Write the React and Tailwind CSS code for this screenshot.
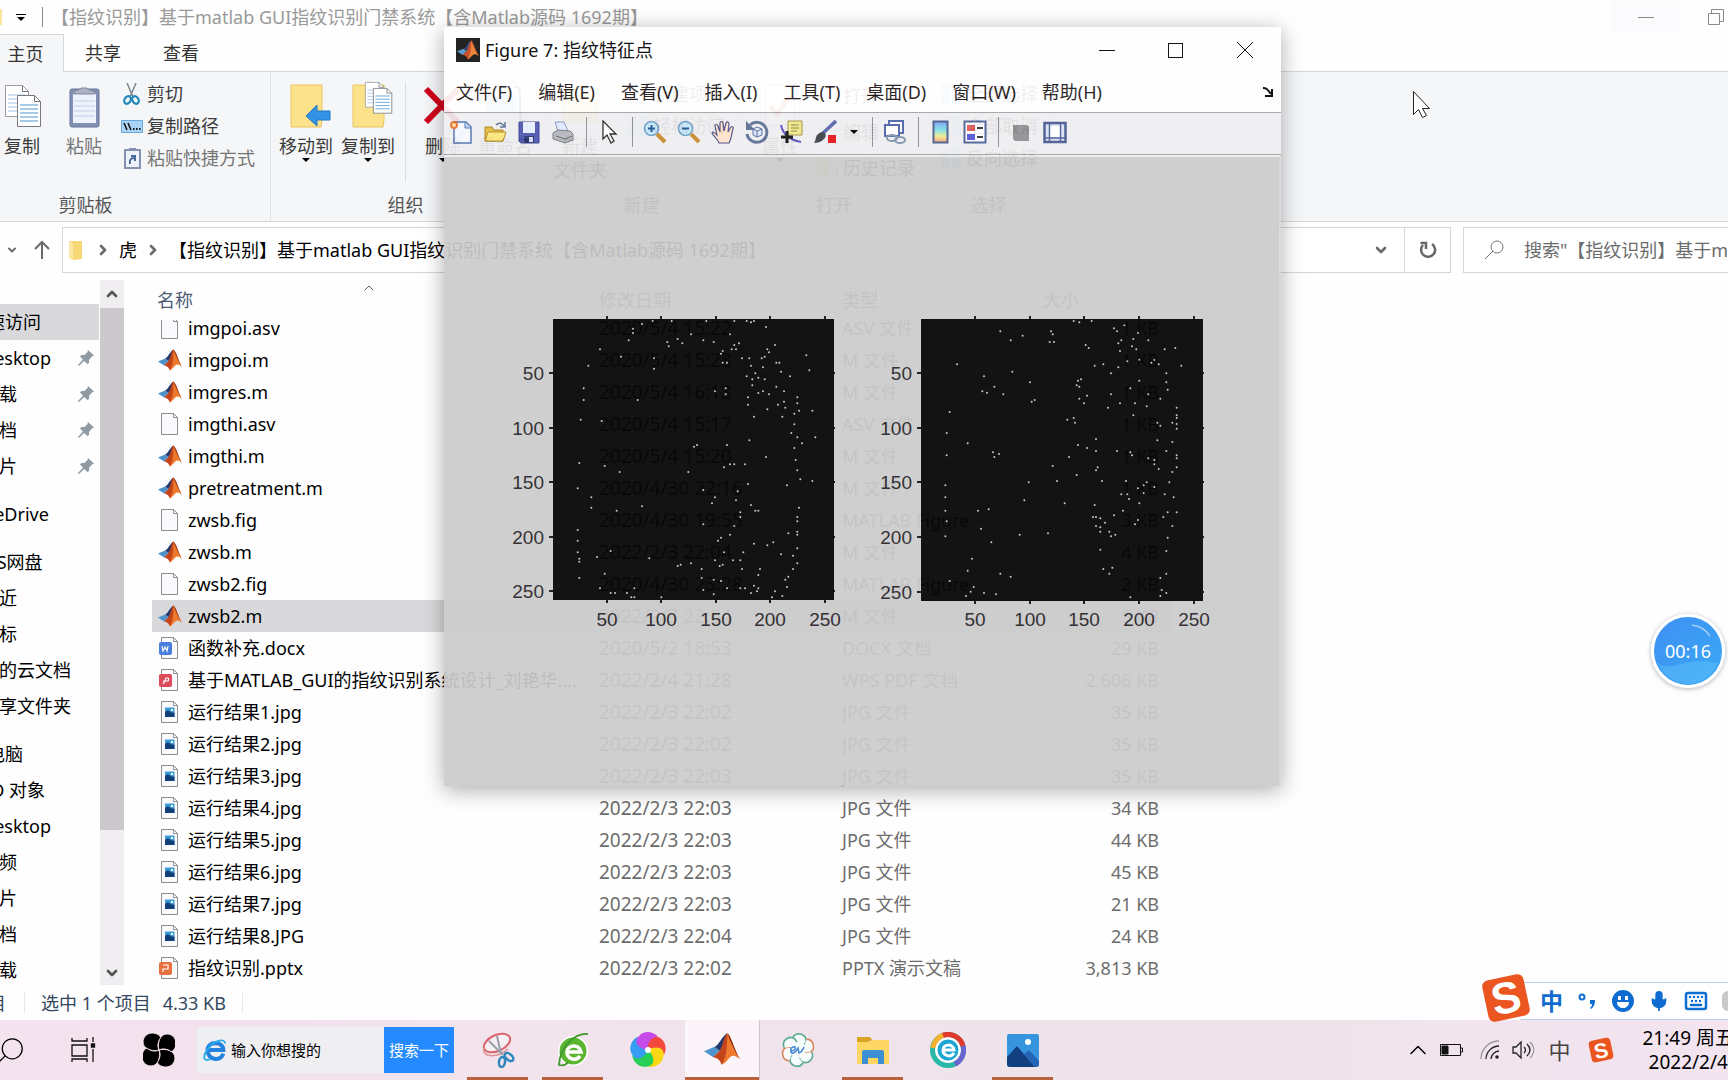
import { ChevronDown, ChevronRight, ChevronUp, Keyboard, Mic, Search } from 'lucide-react';

const NAV_GROUPS = [
  {
    title: '快速访问',
    selected: true,
    items: [
      { label: 'Desktop', pinned: true },
      { label: '下载', pinned: true },
      { label: '文档', pinned: true },
      { label: '图片', pinned: true },
    ],
  },
  { title: 'OneDrive', items: [] },
  {
    title: 'WPS网盘',
    items: [{ label: '最近' }, { label: '星标' }, { label: '我的云文档' }, { label: '共享文件夹' }],
  },
  {
    title: '此电脑',
    items: [
      { label: '3D 对象' },
      { label: 'Desktop' },
      { label: '视频' },
      { label: '图片' },
      { label: '文档' },
      { label: '下载' },
    ],
  },
];

const FILES = [
  ['blank', 'imgpoi.asv', '2020/5/4 15:22', 'ASV 文件', '1 KB'],
  ['matlab', 'imgpoi.m', '2020/5/4 15:23', 'M 文件', '1 KB'],
  ['matlab', 'imgres.m', '2020/5/4 16:13', 'M 文件', '1 KB'],
  ['blank', 'imgthi.asv', '2020/5/4 15:17', 'ASV 文件', '1 KB'],
  ['matlab', 'imgthi.m', '2020/5/4 15:20', 'M 文件', '1 KB'],
  ['matlab', 'pretreatment.m', '2020/4/30 22:16', 'M 文件', '1 KB'],
  ['blank', 'zwsb.fig', '2020/4/30 19:55', 'MATLAB Figure', '3 KB'],
  ['matlab', 'zwsb.m', '2022/2/3 22:04', 'M 文件', '4 KB'],
  ['blank', 'zwsb2.fig', '2020/4/30 23:28', 'MATLAB Figure', '2 KB'],
  ['matlab', 'zwsb2.m', '2022/2/3 22:04', 'M 文件', '5 KB'],
  ['docx', '函数补充.docx', '2020/5/2 18:53', 'DOCX 文档', '29 KB'],
  ['pdf', '基于MATLAB_GUI的指纹识别系统设计_刘艳华....', '2022/2/4 21:28', 'WPS PDF 文档', '2,606 KB'],
  ['image', '运行结果1.jpg', '2022/2/3 22:02', 'JPG 文件', '35 KB'],
  ['image', '运行结果2.jpg', '2022/2/3 22:02', 'JPG 文件', '35 KB'],
  ['image', '运行结果3.jpg', '2022/2/3 22:03', 'JPG 文件', '35 KB'],
  ['image', '运行结果4.jpg', '2022/2/3 22:03', 'JPG 文件', '34 KB'],
  ['image', '运行结果5.jpg', '2022/2/3 22:03', 'JPG 文件', '44 KB'],
  ['image', '运行结果6.jpg', '2022/2/3 22:03', 'JPG 文件', '45 KB'],
  ['image', '运行结果7.jpg', '2022/2/3 22:03', 'JPG 文件', '21 KB'],
  ['image', '运行结果8.JPG', '2022/2/3 22:04', 'JPG 文件', '24 KB'],
  ['pptx', '指纹识别.pptx', '2022/2/3 22:02', 'PPTX 演示文稿', '3,813 KB'],
];

const MENUS = ['文件(F)', '编辑(E)', '查看(V)', '插入(I)', '工具(T)', '桌面(D)', '窗口(W)', '帮助(H)'];

// minutiae coordinates, three units to a pixel
const LEFT_POINTS =
  '458,63 515,63 619,63 703,63 740,63 753,67 762,63 426,72 798,81 399,86 399,99 573,103 690,103 533,117 386,121 610,121 502,126 641,126 547,130 717,130 703,135 825,135 506,139 300,148 695,148 708,148 668,153 802,148 807,157 663,161 919,166 363,170 462,175 794,170 785,175 726,175 748,175 668,188 681,188 829,188 838,188 265,197 753,197 789,202 462,206 928,211 843,215 766,220 740,229 870,229 775,233 757,238 794,238 757,256 829,260 251,265 677,265 645,274 852,274 789,274 775,279 677,283 807,283 744,292 892,292 251,300 413,300 852,305 892,310 744,314 834,314 856,323 802,328 897,332 937,332 883,341 762,350 847,350 242,359 305,363 883,373 874,399 892,412 946,412 748,421 906,430 591,435 582,440 681,435 883,444 798,471 887,480 238,489 690,493 703,493 735,493 314,498 672,502 892,511 359,516 565,516 901,538 937,543 744,552 861,556 233,565 610,570 713,574 274,592 645,592 708,601 636,610 753,615 426,619 274,623 897,623 350,632 766,632 775,632 721,637 721,651 892,651 892,664 610,673 703,678 233,690 892,695 865,700 690,704 892,704 663,713 654,722 233,722 820,727 762,731 802,736 892,745 332,753 672,757 233,757 730,757 843,763 879,767 291,771 448,775 238,776 238,785 645,781 699,781 721,781 573,790 892,790 542,794 533,798 668,794 659,798 605,807 726,807 780,807 879,807 314,821 775,825 865,830 238,834 605,834 641,839 856,839 663,843 762,857 861,861 300,865 403,865 681,865 721,865 735,865 775,865 610,870 771,874 825,874 332,879 345,879 381,879 753,879 641,883 847,888 394,892 403,892 484,892 816,892';

const RIGHT_POINTS =
  '641,63 658,67 695,63 793,76 762,85 421,94 573,94 771,94 834,99 578,103 488,107 820,117 452,121 569,126 582,126 784,121 865,121 775,130 677,135 686,144 816,139 829,148 780,153 914,148 946,144 838,179 883,180 802,184 291,193 730,193 874,188 896,193 704,197 964,197 775,202 457,215 753,220 919,220 372,229 663,238 654,242 838,242 510,247 919,247 650,256 403,260 658,260 811,265 923,269 367,274 381,278 430,283 753,283 865,283 681,287 658,296 901,296 524,300 515,305 672,310 780,310 825,310 860,319 744,323 950,323 269,336 820,346 950,346 641,354 950,354 622,359 645,368 892,368 937,368 950,372 901,377 950,386 260,399 708,417 892,421 937,426 323,430 654,435 681,444 708,453 771,453 919,453 399,457 811,457 417,462 260,466 816,466 950,466 403,471 627,471 865,475 950,475 883,480 883,493 578,498 713,502 950,502 896,507 708,511 937,516 650,525 591,543 726,543 798,543 506,547 860,547 928,547 851,556 256,556 883,561 834,565 851,579 784,583 802,583 914,583 256,592 941,592 807,597 493,601 614,610 838,610 704,615 386,628 354,632 256,632 789,632 923,637 950,637 762,646 699,651 708,651 910,651 721,655 834,660 260,664 735,668 825,673 708,678 937,678 721,682 363,686 721,695 748,695 564,700 479,704 766,704 256,709 753,709 923,713 394,727 721,749 919,753 336,776 757,803 730,807 323,812 421,821 748,821 919,821 452,830 901,834 269,843 341,861 905,870 332,875 372,879 919,879 408,883 318,888 901,888 811,892';

function MatlabMark({ className }) {
  return (
    <svg viewBox="0 0 24 22" className={className} aria-hidden="true">
      <path d="M0 12.500 7 9.500l3.500 2.600-4.400 4.400z" fill="#4f93cc" />
      <path d="M7 9.500C10 8.600 11.500 3 15.500 0.500L13.500 8l-3 4.100z" fill="#243a6b" />
      <path d="M10.500 12.100C12.500 9 13.500 2 15.500.5c1.500 1 1.500 7 1.200 12-1 4-2.500 7-5 9-.7-2.500-2-4.500-5.600-5z" fill="#c4441c" />
      <path d="M15.500.5C18 2 20 11 24 18c-3-2.800-5-3.200-7-1.200-2 2-3 3.900-5.300 4.700C15 17 15.500 9 15.500.5z" fill="#ee7a2b" />
      <path d="M15.500.5C18 2 20 11 24 18c-3-4.500-5.500-10-8.500-17.500z" fill="#8b2318" />
    </svg>
  );
}

function FileIcon({ kind }) {
  if (kind === 'matlab') return <MatlabMark className="h-[22px] w-6" />;
  const badge = { docx: ['#4a7fe0', 'M4 10l1 5 2-4 2 4 1-5'], pdf: ['#dd4b58', 'M5 16c1-1 3-3 3-6h2a2 2 0 0 1 0 3H5'], pptx: ['#e8703e', 'M5 9h5v4H5v3'] }[kind];
  return (
    <svg viewBox="0 0 24 24" className="h-6 w-6" fill="none" aria-hidden="true">
      <path d="M3.500 1.500h12l4 4v17h-16z" fill="#fafafc" stroke="#8e8e96" />
      <path d="M15.500 1.500v4h4" stroke="#8e8e96" />
      {kind === 'image' && (
        <>
          <path d="M7 7.500h9.500v9.500H7z" fill="#3b9fdc" />
          <path d="M7 12l3-2 3 2.500 3.500 0V17H7z" fill="#123f78" />
          <path d="M13 9h2v2h-2z" fill="#fff" />
        </>
      )}
      {badge && (
        <>
          <rect x="1" y="6" width="13" height="13" rx="2" fill={badge[0]} />
          <path d={badge[1]} stroke="#fff" strokeWidth="1.200" />
        </>
      )}
    </svg>
  );
}

function Sheet({ x, y, muted }) {
  return (
    <g transform={`translate(${x} ${y})`}>
      <path d="M.5.5h17l6 6v25H.5z" fill="#fff" stroke={muted ? '#9a9aa0' : '#77777d'} />
      <path d="M17.500.5v6h6" fill="none" stroke="#77777d" />
      <path d="M3 10h18M3 14h18M3 18h18M3 22h18M3 26h18" stroke={muted ? '#a7c3e6' : '#4c96cf'} />
    </g>
  );
}

function BigIcon({ name }) {
  return (
    <svg viewBox="0 0 44 44" className="h-11 w-11 overflow-visible" fill="none" aria-hidden="true">
      {name === 'copy' && (
        <>
          <Sheet x={5} y={1} muted />
          <Sheet x={17} y={11} />
        </>
      )}
      {name === 'paste' && (
        <>
          <rect x="8" y="5" width="29" height="38" rx="2" fill="#8290b5" stroke="#66739a" />
          <path d="M11 10h23v29H11z" fill="#eef2fb" />
          <path d="M12 17h21M12 22h21M12 27h21M12 32h21" stroke="#c3d0ea" />
          <path d="M12 10c0-4 5-3 7-6h6c2 3 8 2 8 6z" fill="#aeb4c4" stroke="#8289a0" />
        </>
      )}
      {(name === 'move' || name === 'copyto') && <path d="M7 1h31v35l-1 7H7z" fill="#fde28c" stroke="#e8c561" />}
      {name === 'move' && <path d="M22 32l11-11v6h13v9H33v6z" fill="#3293e6" stroke="#2377c2" />}
      {name === 'copyto' && (
        <>
          <g transform="translate(19 -2) scale(0.8)">
            <Sheet x={0} y={0} muted />
          </g>
          <g transform="translate(27 4) scale(0.8)">
            <Sheet x={0} y={0} />
          </g>
        </>
      )}
      {name === 'delete' && <path d="M5 5l32 33M37 5L5 38" stroke="#d0021b" strokeWidth="6" />}
      {name === 'rename' && (
        <>
          <rect x="3" y="12" width="30" height="16" fill="#8fc4ef" />
          <path d="M32 3c4 0 5 2 5 5v24c0 3 1 5 5 5" stroke="#555" strokeWidth="2" />
        </>
      )}
      {name === 'newfolder' && <path d="M5 5h13l3 4h18v30H5z" fill="#fde28c" stroke="#e8c561" />}
      {name === 'props' && (
        <>
          <path d="M8 1h28v40H8z" fill="#fff" stroke="#999" />
          <path d="M12 22l7 8 13-18" stroke="#e05b3a" strokeWidth="4" />
        </>
      )}
    </svg>
  );
}

function SmallIcon({ name }) {
  return (
    <svg viewBox="0 0 22 22" className="h-[22px] w-[22px] shrink-0" fill="none" aria-hidden="true">
      {name === 'cut' && (
        <>
          <path d="M6 0l6 14M15 0L9 14" stroke="#7e878f" strokeWidth="1.500" />
          <ellipse cx="6.500" cy="17" rx="3" ry="4" transform="rotate(30 6.500 17)" stroke="#1f86b8" strokeWidth="2.200" />
          <ellipse cx="14.500" cy="17" rx="3" ry="4" transform="rotate(-30 14.500 17)" stroke="#1f86b8" strokeWidth="2.200" />
        </>
      )}
      {name === 'path' && (
        <>
          <path d="M.5 5.500h21v12H.5z" fill="#a9d4f7" stroke="#6aa7da" />
          <path d="M3 8l3 7M7 8l3 7" stroke="#111" strokeWidth="1.500" />
          <path d="M12 14h1.500M15 14h1.500M18 14h1.500" stroke="#111" strokeWidth="2" />
        </>
      )}
      {name === 'shortcut' && (
        <>
          <rect x="4" y="3" width="15" height="18" fill="#eef3fb" stroke="#8592b0" strokeWidth="2" />
          <path d="M8 3.500h7V1H8z" fill="#8592b0" />
          <path d="M9 17c-1-4 1-6 4-6M10 9h4v5" stroke="#46699c" strokeWidth="2" />
        </>
      )}
      {name === 'grid' && <path d="M1 1h9v9H1zM12 1h9v9h-9zM1 12h9v9H1zM12 12h9v9h-9z" fill="#a9cff2" />}
      {name === 'doc' && <path d="M4 2h14v18H4z" fill="#fff" stroke="#bbb" />}
      {name === 'history' && (
        <>
          <path d="M1 1h10v18H1z" fill="#fde28c" />
          <circle cx="15" cy="15" r="6" fill="#dfeedd" stroke="#7ba37a" />
        </>
      )}
    </svg>
  );
}

function BigButton({ icon, label, caret, muted, className = 'w-[62px]' }) {
  return (
    <button type="button" className={`flex shrink-0 flex-col items-center pt-3 ${className}`}>
      <BigIcon name={icon} />
      <span className={`mt-1.5 whitespace-pre text-center leading-6 ${muted ? 'text-[#767676]' : 'text-[#3b3b3b]'}`}>{label}</span>
      {caret && <span className="border-x-4 border-t-4 border-x-transparent border-t-black" />}
    </button>
  );
}

function SmallButton({ icon, label, muted }) {
  return (
    <button type="button" className={`flex h-8 items-center gap-1 whitespace-nowrap ${muted ? 'text-[#767676]' : 'text-[#3b3b3b]'}`}>
      <SmallIcon name={icon} />
      {label}
    </button>
  );
}

function RibbonGroup({ label, className, children }) {
  return (
    <section className={`flex shrink-0 flex-col border-r border-[#e0e1e3] ${className}`}>
      <div className="flex flex-1">{children}</div>
      <h2 className="pb-1 pr-1 text-center leading-6 text-[#555]">{label}</h2>
    </section>
  );
}

function Ribbon() {
  return (
    <div className="-ml-[95px] flex h-[151px] border-y border-[#d5d7da] bg-[#f5f6f8]">
      <RibbonGroup label="剪贴板" className="w-[366px]">
        <div className="flex pl-[86px]">
          <BigButton icon="copy" label="复制" />
          <BigButton icon="paste" label="粘贴" muted />
          <div className="pl-1.5 pt-1.5">
            <SmallButton icon="cut" label="剪切" />
            <SmallButton icon="path" label="复制路径" />
            <SmallButton icon="shortcut" label="粘贴快捷方式" muted />
          </div>
        </div>
      </RibbonGroup>
      <RibbonGroup label="组织" className="w-[274px]">
        <div className="flex pl-1">
          <BigButton icon="move" label="移动到" caret />
          <BigButton icon="copyto" label="复制到" caret />
          <span className="mx-1.5 mt-2.5 h-[100px] w-px bg-[#dcdde0]" />
          <BigButton icon="delete" label="删除" caret />
          <BigButton icon="rename" label="重命名" />
        </div>
      </RibbonGroup>
      <RibbonGroup label="新建" className="w-[198px]">
        <BigButton icon="newfolder" label={'新建\n文件夹'} className="w-[70px]" />
        <div className="pl-3 pt-1.5">
          <SmallButton icon="doc" label="新建项目" />
          <SmallButton icon="grid" label="轻松访问" />
        </div>
      </RibbonGroup>
      <RibbonGroup label="打开" className="w-[187px]">
        <BigButton icon="props" label="属性" caret className="w-[74px]" />
        <div className="flex flex-col gap-1 pt-2">
          <SmallButton icon="doc" label="打开" />
          <SmallButton icon="doc" label="编辑" />
          <SmallButton icon="history" label="历史记录" />
        </div>
      </RibbonGroup>
      <RibbonGroup label="选择" className="w-[122px]">
        <div className="pl-2.5 pt-1.5">
          <SmallButton icon="grid" label="全部选择" />
          <SmallButton icon="grid" label="全部取消" />
          <SmallButton icon="grid" label="反向选择" />
        </div>
      </RibbonGroup>
    </div>
  );
}

function AddressRow() {
  return (
    <div className="flex h-[58px] items-start pt-[5px] text-[#6b6b6b]">
      <div className="flex h-[46px] w-[62px] shrink-0 items-center gap-4 pl-1.5">
        <ChevronDown className="h-3 w-3" strokeWidth={4} />
        <svg viewBox="0 0 16 20" className="h-5 w-4" fill="none" stroke="currentColor" strokeWidth="2" aria-hidden="true">
          <path d="M8 19V2M1 9l7-7 7 7" />
        </svg>
      </div>
      <div className="flex h-[46px] min-w-0 flex-1 items-center border border-[#d6d6d8] bg-white">
        <svg viewBox="0 0 14 20" className="ml-1.5 h-5 w-3.5 shrink-0" aria-hidden="true">
          <path d="M0 1h13v18l-9 1-4-2z" fill="#f8d775" />
          <path d="M0 1l4 2v17l-4-2z" fill="#fbe8a6" />
        </svg>
        <ChevronRight className="ml-3 mr-2 h-4 w-4 shrink-0" strokeWidth={4} />
        <span className="text-black">虎</span>
        <ChevronRight className="mx-2 h-4 w-4 shrink-0" strokeWidth={4} />
        <span className="whitespace-nowrap text-black">【指纹识别】基于matlab GUI指纹识别门禁系统【含Matlab源码 1692期】</span>
        <button type="button" aria-label="以前的位置" className="ml-auto flex h-full w-[46px] shrink-0 items-center justify-center">
          <ChevronDown className="h-4 w-4" strokeWidth={4} />
        </button>
        <button type="button" aria-label="刷新" className="flex h-full w-[46px] shrink-0 items-center justify-center border-l border-[#d6d6d8]">
          <svg viewBox="0 0 18 18" className="h-[18px] w-[18px]" fill="none" stroke="#666" strokeWidth="2.500" aria-hidden="true">
            <path d="M13 3a7 7 0 1 1-9 1" />
            <path d="M1.500 2H7v6" />
          </svg>
        </button>
      </div>
      <label className="ml-3 flex h-[46px] w-[265px] shrink-0 items-center border-y border-l border-[#d6d6d8] bg-white pl-5">
        <svg viewBox="0 0 20 20" className="mr-5 h-5 w-5 shrink-0" fill="none" stroke="#777" aria-hidden="true">
          <circle cx="13" cy="7" r="6" />
          <path d="M9 11l-8 8" />
        </svg>
        <input
          type="text"
          aria-label="搜索"
          placeholder={'搜索"【指纹识别】基于matlab GUI指纹识别门禁系统'}
          className="w-0 flex-1 text-[18px] outline-none placeholder:text-[#6b6b6b]"
        />
      </label>
    </div>
  );
}

function Sidebar() {
  return (
    <nav className="-ml-[31px] w-[131px] shrink-0 pt-6 text-black">
      {NAV_GROUPS.map((group) => (
        <div key={group.title} className="mb-3">
          <a href="#" className={`mr-px flex h-9 items-center whitespace-nowrap ${group.selected ? 'bg-[#d9d9db]' : ''}`}>
            {group.title}
          </a>
          {group.items.map((item) => (
            <a key={item.label} href="#" className="flex h-9 items-center justify-between whitespace-nowrap pl-3 pr-1.5">
              {item.label}
              {item.pinned && (
                <svg viewBox="0 0 16 16" className="h-4 w-4" fill="#929aa1" aria-hidden="true">
                  <path d="M10 0l6 5.500-2 1-3 3.500v3l-1.500 1L6 11l-5 5-1-1 5-5.500L2 6.500 3.500 5h3L9.500 2z" />
                </svg>
              )}
            </a>
          ))}
        </div>
      ))}
    </nav>
  );
}

function FileList() {
  return (
    <div className="relative isolate min-w-0 flex-1 overflow-hidden pl-7">
      <table className="w-[1019px] table-fixed border-collapse text-left">
        <thead className="relative z-10 text-[#4c5b73]">
          <tr className="h-8">
            {[
              ['名称', 'w-[434px] pl-[5px]'],
              ['修改日期', 'w-[244px] pl-[13px]'],
              ['类型', 'w-[200px] pl-3'],
              ['大小', 'w-[141px] pl-[13px]'],
            ].map(([label, cls]) => (
              <th key={label} scope="col" className={`relative p-0 align-top font-normal ${cls}`}>
                <div className="-mb-2 flex h-10 items-center bg-[#fefefe]">{label}</div>
                {label === '名称' && (
                  <ChevronUp className="absolute inset-x-0 top-0 mx-auto h-4 w-4" strokeWidth={1.5} />
                )}
              </th>
            ))}
          </tr>
        </thead>
        <tbody>
          {FILES.map(([kind, name, date, type, size]) => (
            <tr key={name} className={`h-8 ${name === 'zwsb2.m' ? 'bg-[#d9d9db]' : ''}`}>
              <td className="p-0 pl-1.5">
                <span className="flex items-center gap-1.5 whitespace-nowrap leading-6 text-black">
                  <FileIcon kind={kind} />
                  {name}
                </span>
              </td>
              <td className="p-0 pl-[13px] text-[19px] leading-6 text-[#6d6d6d]">{date}</td>
              <td className="p-0 pl-3 leading-6 text-[#6d6d6d]">{type}</td>
              <td className="p-0 pr-3 text-right leading-6 text-[#6d6d6d]">{size}</td>
            </tr>
          ))}
        </tbody>
      </table>
    </div>
  );
}

function Explorer() {
  return (
    <div className="isolate flex min-h-0 flex-1 flex-col bg-[#fefefe]">
      <header className="flex h-[34px] shrink-0 items-center">
        <span className="h-4 w-0.5 bg-[#fbe3a0]" />
        <span className="ml-3.5 flex flex-col items-center gap-0.5">
          <span className="h-px w-2.5 bg-black" />
          <span className="border-x-4 border-t-4 border-x-transparent border-t-black" />
        </span>
        <span className="ml-4 mr-2 h-5 w-px bg-[#888]" />
        <h1 className="whitespace-nowrap text-[#999]">【指纹识别】基于matlab GUI指纹识别门禁系统【含Matlab源码 1692期】</h1>
        <div className="ml-auto flex shrink-0 text-[#888]">
          <button type="button" aria-label="最小化" className="flex h-8 w-[68px] items-center justify-center bg-[#fbfbfd]">
            <span className="h-px w-4 bg-current" />
          </button>
          <button type="button" aria-label="还原" className="flex h-8 w-12 items-center justify-end pr-1">
            <svg viewBox="0 0 16 16" className="h-4 w-4" fill="none" stroke="currentColor" aria-hidden="true">
              <path d="M.5 4.500h11v11H.5zM3.500 4.500v-4h12v12h-4" />
            </svg>
          </button>
        </div>
      </header>
      <div className="flex h-[37px] shrink-0 text-[#333]">
        <button type="button" className="relative -mb-px w-16 border-r border-t border-[#d5d7da] bg-[#f5f6f8] pr-3 text-center">主页</button>
        <button type="button" className="w-[78px] text-center">共享</button>
        <button type="button" className="w-[78px] text-center">查看</button>
      </div>
      <Ribbon />
      <AddressRow />
      <main className="flex min-h-0 flex-1 overflow-hidden">
        <Sidebar />
        <div className="flex w-6 shrink-0 flex-col items-center bg-[#f0eef1] text-[#555]">
          <ChevronUp className="my-1.5 h-4 w-4 shrink-0" strokeWidth={4} />
          <div className="h-[522px] w-full bg-[#cbc9cc]" />
          <ChevronDown className="mb-1 mt-auto h-4 w-4 shrink-0" strokeWidth={4} />
        </div>
        <FileList />
      </main>
      <footer className="flex h-[35px] shrink-0 items-center text-[#33475f]">
        <span className="-ml-3 mr-[18px]">目</span>
        <span className="mr-4 h-5 w-px bg-[#e6e6e8]" />
        <span className="mr-3">选中 1 个项目</span>
        <span className="mr-4">4.33 KB</span>
        <span className="h-5 w-px bg-[#e6e6e8]" />
      </footer>
    </div>
  );
}

function ToolIcon({ name }) {
  return (
    <svg viewBox="0 0 24 24" className="h-6 w-6" fill="none" aria-hidden="true">
      {name === 'new' && (
        <>
          <path d="M5 2h12l5 5v16H5z" fill="#f4f9ff" stroke="#4d6fae" strokeWidth="1.500" />
          <path d="M16 2v6h6" fill="#bcd4f2" stroke="#4d6fae" />
          <circle cx="5" cy="5" r="3" fill="#ffd9a0" stroke="#e5702c" strokeWidth="2" />
        </>
      )}
      {name === 'open' && (
        <>
          <path d="M2 21V7h7l2 3h9v11z" fill="#e8b93b" stroke="#a67f1a" />
          <path d="M2 21l3-9h18l-3 9z" fill="#fce77c" stroke="#b08a20" />
          <path d="M13 5c3-3 6-2 8 1M22 2v5h-5" stroke="#5a6f93" strokeWidth="1.500" />
        </>
      )}
      {name === 'save' && (
        <>
          <path d="M2 2h20v21H4l-2-2z" fill="#4b55b0" stroke="#343c8b" />
          <path d="M6 2h12v11H6z" fill="#e6efff" />
          <path d="M7 16h10v7H7z" fill="#27306d" />
          <path d="M12 17h4v5h-4z" fill="#d8ddf5" />
        </>
      )}
      {name === 'print' && (
        <>
          <path d="M4 2h9l4 9H7z" fill="#dfeaff" stroke="#8296b8" />
          <path d="M2 13l5-3 12 1 3 3v6l-8 3-12-4z" fill="#b3b5bb" stroke="#74777f" />
          <path d="M5 16l9 3 7-3" stroke="#5f6269" />
        </>
      )}
      {name === 'pointer' && <path d="M6 1v18l4-4 4 8 3-2-4-7h6z" fill="#fff" stroke="#222" strokeWidth="1.300" />}
      {(name === 'zoomin' || name === 'zoomout') && (
        <>
          <path d="M14 14l8 8" stroke="#c98a2b" strokeWidth="4" />
          <circle cx="8.500" cy="8.500" r="7" fill="#c4e7f8" stroke="#6b9cc4" strokeWidth="1.500" />
          <path d={name === 'zoomin' ? 'M5 8.500h7M8.500 5v7' : 'M5 8.500h7'} stroke="#1e4f8c" strokeWidth="2" />
        </>
      )}
      {name === 'hand' && (
        <path
          d="M8 23c-1-4-6-7-7-10 1-2 3 0 5 2L4 6c0-2 2-2 3 0l2 6V3c0-2 3-2 3 0l1 8 2-8c1-2 3-1 3 1l-1 8 3-5c1-1 3 0 2 2-2 6-1 9-4 14z"
          fill="#ffe3cb"
          stroke="#4b4f86"
          strokeWidth="1.200"
        />
      )}
      {name === 'rotate' && (
        <>
          <path d="M5 5a10 10 0 1 1-3 9" stroke="#5b6c94" strokeWidth="3" />
          <path d="M1 1v9h9z" fill="#5b6c94" />
          <path d="M12 7l5 2v6l-5 2-4-2V9zM8 9l4 2 5-2M12 11v6" fill="#dbe5f7" stroke="#5067a0" />
        </>
      )}
      {name === 'cursor' && (
        <>
          <path d="M2 5c2 10 9 15 20 17" stroke="#5a50c0" strokeWidth="2" />
          <path d="M9 1h14v14H9z" fill="#f0e88c" stroke="#9c933e" />
          <path d="M12 5h8M12 8h8M12 11h6" stroke="#89803a" />
          <path d="M8 11v12M2 17h12" stroke="#111" strokeWidth="3" />
        </>
      )}
      {name === 'brush' && (
        <>
          <path d="M23 1L9 14" stroke="#5463aa" strokeWidth="3.500" />
          <path d="M10 12c3 1 4 4 1 7-3 3-7 4-10 4 2-2 1-5 3-8 2-2 4-3 6-3z" fill="#3c3f47" />
          <path d="M15 15h8v8h-8z" fill="#e8121c" />
        </>
      )}
      {name === 'link' && (
        <>
          <path d="M6 1h14v12H6z" fill="#fff" stroke="#4963a5" strokeWidth="2" />
          <path d="M2 5h14v11H2z" fill="#fff" stroke="#4963a5" strokeWidth="2" />
          <ellipse cx="9" cy="18" rx="5" ry="3" stroke="#7e93ad" strokeWidth="2" />
          <ellipse cx="17" cy="20" rx="5" ry="3" stroke="#7e93ad" strokeWidth="2" />
        </>
      )}
      {name === 'colorbar' && (
        <>
          <defs>
            <linearGradient id="bar" x1="0" y1="0" x2="0" y2="1">
              <stop offset="0" stopColor="#7c9df0" />
              <stop offset="0.400" stopColor="#7fe0ea" />
              <stop offset="0.700" stopColor="#f1ee8b" />
              <stop offset="1" stopColor="#ef9a7c" />
            </linearGradient>
          </defs>
          <path d="M4.500 1.500h14v21h-14z" fill="url(#bar)" stroke="#4a5a8c" strokeWidth="2" />
        </>
      )}
      {name === 'legend' && (
        <>
          <path d="M1.500 1.500h21v21h-21z" fill="#fff" stroke="#4d5f95" strokeWidth="2" />
          <path d="M4 5h8v6H4z" fill="#e0585a" />
          <path d="M4 14h8v6H4z" fill="#5355d8" />
          <path d="M14 8h6M14 17h6" stroke="#333" strokeWidth="2" />
        </>
      )}
      {name === 'hide' && <path d="M4 5h14l2 2v14H6l-2-2z" fill="#8f8f91" />}
      {name === 'dock' && (
        <>
          <path d="M1.500 3h21v19h-21z" fill="#d9e2f5" stroke="#47598f" strokeWidth="2.500" />
          <path d="M6.500 4v18M17.500 4v18M2 18h20" stroke="#47598f" strokeWidth="1.500" />
          <path d="M7.500 6h9v11h-9z" fill="#fff" />
        </>
      )}
    </svg>
  );
}

function ToolGroup({ names }) {
  return names.map((name) => (
    <button key={name} type="button" aria-label={name} className="flex w-[34px] shrink-0 justify-center">
      <ToolIcon name={name} />
    </button>
  ));
}

function ToolSeparator() {
  return (
    <span className="flex w-3 shrink-0 justify-center">
      <span className="h-[30px] w-px bg-[#8d8d90]" />
    </span>
  );
}

// 257 x 257 binary image with MATLAB axes ticks on all four sides
function Axes({ left, size, points, xTicks, yTicks, label }) {
  const top = 19;
  return (
    <svg viewBox="0 0 360 340" className="h-[340px] w-[360px] shrink-0" role="img" aria-label={label}>
      <rect x={left} y={top} width={size} height={size} fill="#000" />
      {xTicks.map((x, i) => (
        <g key={x}>
          <path d={`M${x} ${top - 3}v3M${x} ${top + size}v3`} stroke="#111" strokeWidth="2" />
          <text x={x} y={326} textAnchor="middle" className="fill-[#262226] font-['Liberation_Sans',sans-serif] text-[19px]">
            {(i + 1) * 50}
          </text>
        </g>
      ))}
      {yTicks.map((y, i) => (
        <g key={y}>
          <path d={`M${left - 4} ${y}h4M${left + size} ${y}h1`} stroke="#111" strokeWidth="2" />
          <text x={left - 9} y={y + 7} textAnchor="end" className="fill-[#262226] font-['Liberation_Sans',sans-serif] text-[19px]">
            {(i + 1) * 50}
          </text>
        </g>
      ))}
      <g transform="scale(0.33333)" fill="#c4c4c4">
        {points.split(' ').map((p, i) => {
          const [x, y] = p.split(',');
          return <circle key={i} cx={x} cy={y} r="3" />;
        })}
      </g>
    </svg>
  );
}

function FigureWindow() {
  return (
    <div
      role="dialog"
      aria-label="Figure 7"
      className="absolute left-[444px] top-[27px] flex h-[759px] w-[837px] flex-col bg-white opacity-[0.92] shadow-[0_4px_20px_rgba(0,0,0,0.35)]"
    >
      <div className="flex h-[46px] shrink-0 items-center pl-3 pr-0.5">
        <span className="mr-[5px] flex h-6 w-6 items-center justify-center bg-[#111]">
          <MatlabMark className="h-5 w-[22px]" />
        </span>
        <span className="text-black">Figure 7: 指纹特征点</span>
        <div className="ml-auto flex h-full text-black">
          <button type="button" aria-label="最小化" className="flex w-[69px] items-center justify-center">
            <span className="h-px w-4 bg-current" />
          </button>
          <button type="button" aria-label="最大化" className="flex w-[69px] items-center justify-center">
            <span className="h-[15px] w-[15px] border border-current" />
          </button>
          <button type="button" aria-label="关闭" className="flex w-[69px] items-center justify-center">
            <svg viewBox="0 0 16 16" className="h-4 w-4" stroke="currentColor" aria-hidden="true">
              <path d="M0 0l16 16M16 0L0 16" />
            </svg>
          </button>
        </div>
      </div>
      <div className="flex h-10 shrink-0 items-center gap-[26px] border-b border-[#a3a3a5] pb-0.5 pl-3 pr-2 text-[#1c1414]">
        {MENUS.map((menu) => (
          <button key={menu} type="button" className="whitespace-nowrap">
            {menu}
          </button>
        ))}
        <svg viewBox="0 0 10 10" className="ml-auto h-2.5 w-2.5" fill="none" stroke="#000" strokeWidth="2" aria-hidden="true">
          <path d="M0 1c4 0 5 2 8 6M9 2v7H2" />
        </svg>
      </div>
      <div className="flex h-[42px] shrink-0 items-center border-b border-[#a3a3a5] bg-[#efeff1] pb-1">
        <ToolGroup names={['new', 'open', 'save', 'print']} />
        <ToolSeparator />
        <ToolGroup names={['pointer']} />
        <ToolSeparator />
        <ToolGroup names={['zoomin', 'zoomout', 'hand', 'rotate', 'cursor', 'brush']} />
        <span className="flex w-6 justify-center">
          <span className="border-x-4 border-t-4 border-x-transparent border-t-black" />
        </span>
        <ToolSeparator />
        <ToolGroup names={['link']} />
        <ToolSeparator />
        <ToolGroup names={['colorbar', 'legend']} />
        <ToolSeparator />
        <ToolGroup names={['hide', 'dock']} />
      </div>
      <div className="flex flex-1 border-r-2 border-t-2 border-r-[#d8d8da] border-t-[#eee] bg-[#cccccc] pl-14 pt-[143px]">
        <Axes
          left={53}
          size={281}
          points={LEFT_POINTS}
          xTicks={[107, 161, 216, 270, 325]}
          yTicks={[73, 128, 182, 237, 291]}
          label="细化图特征点"
        />
        <Axes
          left={61}
          size={282}
          points={RIGHT_POINTS}
          xTicks={[115, 170, 224, 279, 334]}
          yTicks={[73, 128, 182, 237, 292]}
          label="匹配图特征点"
        />
      </div>
    </div>
  );
}

function SogouMark({ className }) {
  return (
    <span className={`flex shrink-0 items-center justify-center bg-[#ea5520] font-['Liberation_Sans',sans-serif] font-bold text-white ${className}`}>
      S
    </span>
  );
}

function InputMethodBar() {
  return (
    <div className="absolute bottom-[60px] right-0 flex h-[38px] w-[208px] items-center border-y border-[#b9cde6] bg-white text-[#0f6cd0]">
      <SogouMark className="absolute -left-[35px] -top-1.5 h-[42px] w-[42px] -rotate-12 rounded-md text-[44px] leading-none" />
      <span className="ml-5 w-[38px] text-[23px] font-bold leading-none">中</span>
      <svg viewBox="0 0 18 16" className="mr-4 h-4 w-[18px]" aria-hidden="true">
        <circle cx="4" cy="4" r="2.500" fill="none" stroke="currentColor" strokeWidth="2" />
        <path d="M12 7h5c0 4-1 7-4 9l-1-1c1-1 2-2 2-4h-2z" fill="currentColor" />
      </svg>
      <svg viewBox="0 0 22 22" className="mr-3.5 h-[22px] w-[22px]" aria-hidden="true">
        <circle cx="11" cy="11" r="11" fill="currentColor" />
        <path d="M6 6h3v4H6zM13 6h3v4h-3zM5 12h12c0 8-12 8-12 0z" fill="#fff" />
      </svg>
      <Mic className="mr-3.5 h-6 w-[22px] fill-current" strokeWidth={2} />
      <Keyboard className="mr-3.5 h-6 w-6 shrink-0" strokeWidth={2.5} />
      <span className="h-5 w-1.5 rounded-l-full bg-[#c9c9cb]" />
    </div>
  );
}

function TaskIcon({ name }) {
  if (name === 'MATLAB') return <MatlabMark className="h-[34px] w-9" />;
  return (
    <svg viewBox="0 0 36 36" className="h-9 w-9" fill="none" aria-hidden="true">
      {name === '截图工具' && (
        <>
          <ellipse cx="17" cy="11" rx="14" ry="8" transform="rotate(-25 17 11)" fill="#f6eef2" stroke="#d9646c" strokeWidth="2" />
          <path d="M4 16c-3 10 14 10 24 1" stroke="#e08f92" strokeWidth="1.500" />
          <path d="M9 9l14 14M17 4l4 18" stroke="#9aa0a8" strokeWidth="2" />
          <ellipse cx="22" cy="30" rx="3" ry="5" transform="rotate(8 22 30)" stroke="#2e86bd" strokeWidth="2.500" />
          <ellipse cx="29" cy="25" rx="3" ry="5" transform="rotate(-50 29 25)" stroke="#2e86bd" strokeWidth="2.500" />
        </>
      )}
      {name === '360浏览器' && (
        <>
          <circle cx="18" cy="19" r="15" fill="#fff" />
          <circle cx="18" cy="19" r="13.500" fill="#5cb531" />
          <path d="M25 24c-4 6-13 3-13-4s12-9 14 0H12" stroke="#fff" strokeWidth="3.500" />
          <path d="M33 2C20 1 5 14 4 33c4 1 7 0 9-3" stroke="#3f9a2d" strokeWidth="1.800" />
        </>
      )}
      {name === '极速浏览器' && (
        <>
          {['#f4493d', '#fbd714', '#27cf55', '#359df2', '#c64be8'].map((color, i) => (
            <path key={color} d="M18 18C16 9 21 1 28 5c8 3 9 12 6 18-3-6-10-8-16-5z" fill={color} transform={`rotate(${i * 72} 18 18)`} />
          ))}
          <circle cx="18" cy="18" r="3" fill="#fff" />
        </>
      )}
      {name === 'EV录屏' && (
        <>
          {[0, 60, 120, 180, 240, 300].map((angle) => (
            <path
              key={angle}
              d="M13 5c4-6 14-3 13 5-1 3-3 4-5 5"
              fill="#f7fcfd"
              stroke={angle % 180 === 60 ? '#d7875f' : '#5aa98d'}
              strokeWidth="1.600"
              transform={`rotate(${angle} 18 18)`}
            />
          ))}
          <circle cx="18" cy="18" r="8" fill="#f7fcfd" />
          <path d="M11 19c6-1 5-5 2-4s-3 7 0 6c3 0 4-4 5-5l1 5c3-1 4-4 5-6" stroke="#4b8bd4" strokeWidth="1.600" />
        </>
      )}
      {name === '文件资源管理器' && (
        <>
          <path d="M2 5h13l3 4h-4l-2 3H2z" fill="#d9a326" />
          <path d="M2 10h12l3-2h17v24H2z" fill="#ffd663" />
          <path d="M7 32V20q0-2 2-2h18q2 0 2 2v12h-6v-6H13v6z" fill="#3d8fd1" />
        </>
      )}
      {name === '浏览器' && (
        <>
          <circle cx="18" cy="18" r="15.500" stroke="#28b7a8" strokeWidth="5" />
          <path d="M3 16A15.500 15.500 0 0 1 14 3" stroke="#f5b32c" strokeWidth="5" />
          <path d="M13 3.300A15.500 15.500 0 0 1 33 14" stroke="#e0392e" strokeWidth="5" />
          <path d="M33 14a15.500 15.500 0 0 1-8 18" stroke="#6c65cf" strokeWidth="5" />
          <circle cx="18" cy="18" r="11.500" fill="#1ca6d4" stroke="#fff" strokeWidth="2" />
          <path d="M24 21c-3 5-11 3-11-3s10-7 11 0H13" stroke="#fff" strokeWidth="3" />
        </>
      )}
      {name === '照片' && (
        <>
          <rect x="2" y="2" width="32" height="33" rx="2" fill="#3795e0" />
          <path d="M2 25l10-11 18 21H4l-2-2z" fill="#123f80" />
          <path d="M19 22l5-4 10 11v4l-2 2h-2z" fill="#2564b4" />
          <circle cx="23" cy="10" r="3" fill="#fff" />
        </>
      )}
    </svg>
  );
}

const TASKS = [
  { name: '截图工具', running: true },
  { name: '360浏览器', running: true },
  { name: '极速浏览器' },
  { name: 'MATLAB', running: true, active: true },
  { name: 'EV录屏' },
  { name: '文件资源管理器', running: true },
  { name: '浏览器' },
  { name: '照片', running: true },
];

function Taskbar() {
  return (
    <div className="flex h-[60px] shrink-0 items-center bg-linear-to-r from-[#f4e2ee] via-[#efe4ea] via-70% to-[#f3e4f0]">
      <button type="button" aria-label="搜索" className="w-[71px] shrink-0">
        <Search className="-ml-1 h-[30px] w-[30px] -scale-x-100" strokeWidth={1} />
      </button>
      <button type="button" aria-label="任务视图" className="w-[72px] shrink-0">
        <svg viewBox="0 0 25 26" className="h-[26px] w-[25px]" fill="none" stroke="#111" strokeWidth="1.300" aria-hidden="true">
          <path d="M1 1v3h15V1M1 8h15v11H1zM1 25v-3h15v3M22 0v5M22 12v13" />
          <path d="M20.500 7h3v3h-3z" fill="#111" />
        </svg>
      </button>
      <button type="button" aria-label="工具箱" className="w-[54px] shrink-0">
        <svg viewBox="0 0 32 34" className="h-[34px] w-8" aria-hidden="true">
          {[0, 90, 180, 270].map((angle) => (
            <path
              key={angle}
              d="M16 17C9 19 0 16 0 9c0-5 4-9 9-9 4 0 8 2 9 5-3 3-4 8-2 12z"
              stroke="#f4e2ee"
              transform={`rotate(${angle} 16 17)`}
            />
          ))}
        </svg>
      </button>
      <div className="flex h-[46px] w-[257px] shrink-0 items-center bg-[#efeef1]">
        <svg viewBox="0 0 26 26" className="ml-1.5 mr-1 h-[26px] w-6 shrink-0" fill="none" aria-hidden="true">
          <path d="M22 17c-3 9-17 7-17-4C5 3 22 3 22 13H7" stroke="#2583e0" strokeWidth="4.500" />
          <path d="M24 6c0-6-11-4-18 5S0 26 8 23" stroke="#28aee8" strokeWidth="2" />
        </svg>
        <input type="text" aria-label="搜索内容" defaultValue="输入你想搜的" className="w-0 flex-1 text-[15px] text-black outline-none" />
        <button type="button" className="h-full w-[70px] bg-[#2589ff] text-[15px] text-white">
          搜索一下
        </button>
      </div>
      <div className="ml-1.5 flex h-full">
        {TASKS.map((task) => (
          <button
            key={task.name}
            type="button"
            aria-label={task.name}
            className={`flex w-[75px] shrink-0 flex-col items-center justify-between pt-3 ${task.active ? 'border-r border-[#d3c5cf] bg-[#fbf4f9]' : ''}`}
          >
            <TaskIcon name={task.name} />
            {task.running && <span className={`h-[3px] bg-[#b9603f] ${task.active ? 'w-full' : 'w-[61px]'}`} />}
          </button>
        ))}
      </div>
      <div className="ml-auto flex shrink-0 items-center">
        <ChevronUp className="mr-2 h-7 w-7" strokeWidth={1.25} />
        <svg viewBox="0 0 24 14" className="mr-4 h-3.5 w-6" fill="none" stroke="#111" aria-hidden="true">
          <path d="M.5 1.500h20v11H.5zM20.500 5h2v4h-2" />
          <path d="M2 3h6v8H2z" fill="#111" />
        </svg>
        <svg viewBox="0 0 20 20" className="mr-3 h-5 w-5" fill="none" stroke="#222" strokeWidth="1.300" aria-hidden="true">
          <path d="M1 19C1 9 9 1 19 1" stroke="#999" />
          <path d="M6 19c0-7 6-13 13-13M11 19c0-4 4-8 8-8" />
          <circle cx="17" cy="17" r="1.800" fill="#222" stroke="none" />
        </svg>
        <svg viewBox="0 0 24 20" className="mr-3 h-5 w-6" fill="none" stroke="#222" strokeWidth="1.300" aria-hidden="true">
          <path d="M1 7h3l5-5v16l-5-5H1zM12 7c2 2 2 4 0 6M15 4c4 4 4 8 0 12" />
          <path d="M18 2c5 5 5 11 0 16" stroke="#999" />
        </svg>
        <span className="mr-5 text-[22px] text-[#444]">中</span>
        <SogouMark className="mr-[30px] h-[22px] w-[22px] -rotate-12 rounded-sm text-[21px] leading-none" />
        <time className="-mr-1.5 whitespace-nowrap text-center text-[19px] leading-6 text-black">
          21:49 周五
          <br />
          2022/2/4
        </time>
      </div>
    </div>
  );
}

export default function App() {
  return (
    <div className="relative flex h-screen flex-col overflow-hidden bg-white font-['Noto_Sans','Noto_Sans_CJK_SC',sans-serif] text-[18px] leading-6">
      <Explorer />
      <Taskbar />
      <FigureWindow />
      <InputMethodBar />
      <div className="absolute right-[3px] top-[614px] flex h-[74px] w-[74px] items-center justify-center rounded-full border-[3px] border-white bg-linear-to-br from-[#3f8ff2] to-[#38a9f5] text-white shadow-[0_1px_5px_rgba(0,0,0,0.3)]">
        00:16
        <svg viewBox="0 0 68 68" className="absolute inset-0 h-full w-full" fill="none" aria-hidden="true">
          <path d="M38 8c8 1 14 5 18 11" stroke="#9fd0fb" strokeWidth="1.500" />
          <path d="M4 46c14 10 30-8 60 0A32 32 0 0 1 4 46z" fill="#5fc0fa" opacity="0.500" />
        </svg>
      </div>
      <svg viewBox="0 0 19 28" className="absolute left-[1412px] top-[90px] h-7 w-[19px]" fill="#fff" stroke="#222" aria-hidden="true">
        <path d="M1.500 1.500v23l5-5 4 8 4-2-4-7h7z" />
      </svg>
    </div>
  );
}
